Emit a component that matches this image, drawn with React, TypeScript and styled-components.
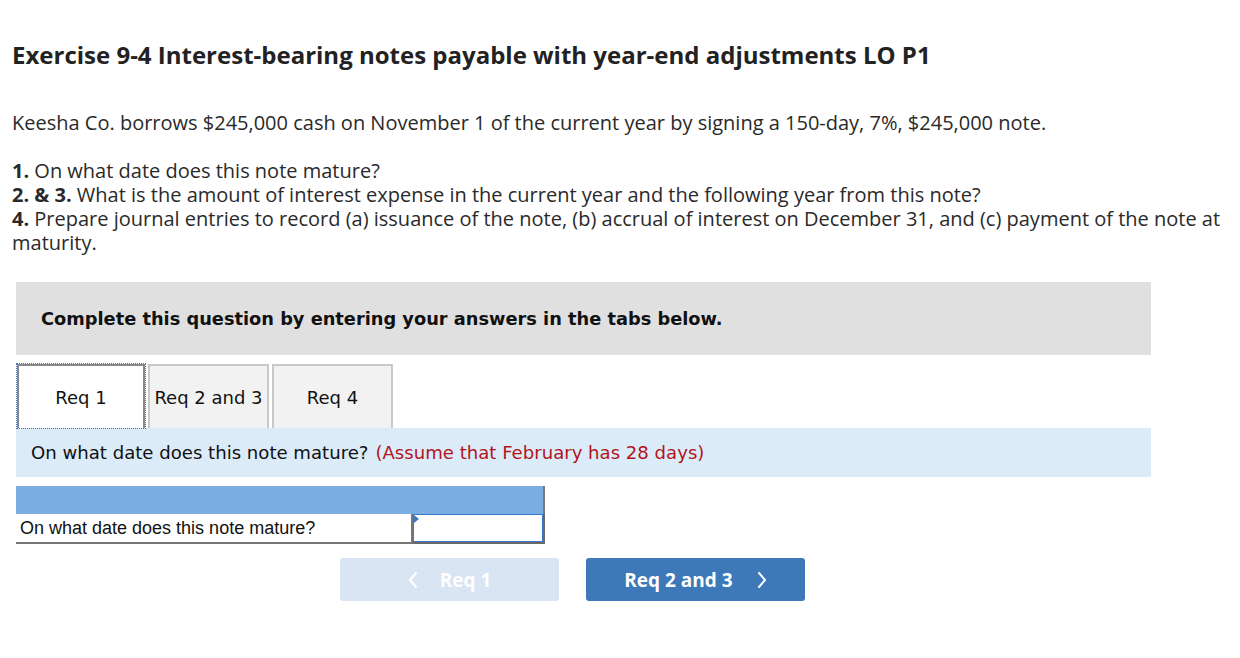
import styled, { createGlobalStyle } from 'styled-components';

const GlobalStyle = createGlobalStyle`
  html, body {
    margin: 0;
    padding: 0;
    background: #fff;
  }
  body {
    font-family: "Open Sans", "Lato", sans-serif;
    color: #2a2a2a;
  }
`;

const Page = styled.div`
  padding: 40px 0 0 0;
  width: 1240px;
`;

const Title = styled.h1`
  margin: 0 0 0 12px;
  font-family: "Open Sans", sans-serif;
  font-weight: 700;
  font-size: 24px;
  line-height: 30px;
  color: #222;
`;

const Intro = styled.p`
  margin: 41px 0 0 12px;
  font-size: 20px;
  line-height: 24px;
  color: #2a2a2a;
`;

const Steps = styled.div`
  margin: 24px 0 0 12px;
  width: 1220px;
  font-size: 20px;
  line-height: 24px;
  color: #2a2a2a;

  b {
    font-weight: 700;
  }
`;

const Content = styled.div`
  margin: 27px 0 0 16px;
  width: 1135px;
  font-family: "DejaVu Sans", Verdana, sans-serif;
`;

const Instruction = styled.div`
  background: #e0e0e0;
  height: 73px;
  display: flex;
  align-items: center;
  padding-left: 25px;
  font-weight: 700;
  font-size: 17.8px;
  color: #111;
`;

const TabRow = styled.div`
  display: flex;
  gap: 3px;
  margin-top: 9px;
  padding-left: 1px;
`;

const Tab = styled.div<{ $active?: boolean }>`
  box-sizing: border-box;
  width: ${(p) => (p.$active ? '128px' : '121px')};
  height: 64px;
  display: flex;
  align-items: center;
  justify-content: center;
  font-size: 18px;
  color: #111;
  background: ${(p) => (p.$active ? '#fff' : '#f2f2f2')};
  border: 2px solid ${(p) => (p.$active ? '#888' : '#c8c8c8')};
  border-bottom: none;
  outline: ${(p) => (p.$active ? '1px dotted #3a73c0' : 'none')};
  outline-offset: 0;
  white-space: nowrap;
`;

const Prompt = styled.div`
  background: #dbecf8;
  height: 49px;
  display: flex;
  align-items: center;
  padding-left: 15px;
  font-size: 18.1px;
  color: #111;
`;

const Hint = styled.span`
  color: #b3141c;
  margin-left: 7px;
`;

const AnswerTable = styled.div`
  margin-top: 9px;
  width: 529px;
  font-family: "Liberation Sans", Arial, sans-serif;
`;

const HeaderRow = styled.div`
  height: 28px;
  background: #7aaee3;
  border-right: 2px solid #777;
`;

const Row = styled.div`
  display: flex;
  height: 30px;
`;

const LabelCell = styled.div`
  flex: 1;
  display: flex;
  align-items: center;
  padding-left: 4px;
  font-size: 18px;
  color: #111;
  border-bottom: 2px solid #777;
  border-right: 2px solid #777;
  white-space: nowrap;
`;

const InputCell = styled.div`
  position: relative;
  width: 132px;
  box-sizing: border-box;
  border: 2px solid #6a6a6a;
  border-left: none;
  border-top: none;
  box-shadow: inset 0 0 0 1px #3a79c8;
  background: #fff;

  &::before {
    content: '';
    position: absolute;
    top: 1px;
    left: 1px;
    border-left: 5px solid #3a79c8;
    border-top: 4px solid transparent;
    border-bottom: 4px solid transparent;
  }
`;

const NavRow = styled.div`
  display: flex;
  gap: 27px;
  margin: 14px 0 0 340px;
`;

const NavButton = styled.button<{ $disabled?: boolean }>`
  width: 219px;
  height: 43px;
  border: none;
  border-radius: 3px;
  background: ${(p) => (p.$disabled ? '#d9e5f2' : '#3d78b8')};
  color: #fff;
  font-family: "Open Sans", sans-serif;
  font-weight: 700;
  font-size: 19px;
  display: flex;
  align-items: center;
  justify-content: center;
  gap: ${(p) => (p.$disabled ? '22px' : '24px')};
  cursor: ${(p) => (p.$disabled ? 'default' : 'pointer')};
  padding: 0;
`;

const Chevron = ({ dir }: { dir: 'left' | 'right' }) => (
  <svg width="10" height="18" viewBox="0 0 10 18" fill="none">
    <path
      d={dir === 'left' ? 'M8 2L2 9l6 7' : 'M2 2l6 7-6 7'}
      stroke="#fff"
      strokeWidth="2"
      strokeLinecap="round"
      strokeLinejoin="round"
    />
  </svg>
);

const App = () => (
  <>
    <GlobalStyle />
    <Page>
      <Title>Exercise 9-4 Interest-bearing notes payable with year-end adjustments LO P1</Title>
      <Intro>
        Keesha Co. borrows $245,000 cash on November 1 of the current year by signing a 150-day, 7%, $245,000 note.
      </Intro>
      <Steps>
        <div><b>1.</b> On what date does this note mature?</div>
        <div><b>2. &amp; 3.</b> What is the amount of interest expense in the current year and the following year from this note?</div>
        <div>
          <b>4.</b> Prepare journal entries to record (a) issuance of the note, (b) accrual of interest on December 31, and (c) payment of the note at maturity.
        </div>
      </Steps>
      <Content>
        <Instruction>Complete this question by entering your answers in the tabs below.</Instruction>
        <TabRow>
          <Tab $active>Req 1</Tab>
          <Tab>Req 2 and 3</Tab>
          <Tab>Req 4</Tab>
        </TabRow>
        <Prompt>
          On what date does this note mature?<Hint>(Assume that February has 28 days)</Hint>
        </Prompt>
        <AnswerTable>
          <HeaderRow />
          <Row>
            <LabelCell>On what date does this note mature?</LabelCell>
            <InputCell />
          </Row>
        </AnswerTable>
      </Content>
      <NavRow>
        <NavButton $disabled>
          <Chevron dir="left" />
          Req 1
        </NavButton>
        <NavButton>
          Req 2 and 3
          <Chevron dir="right" />
        </NavButton>
      </NavRow>
    </Page>
  </>
);

export default App;
